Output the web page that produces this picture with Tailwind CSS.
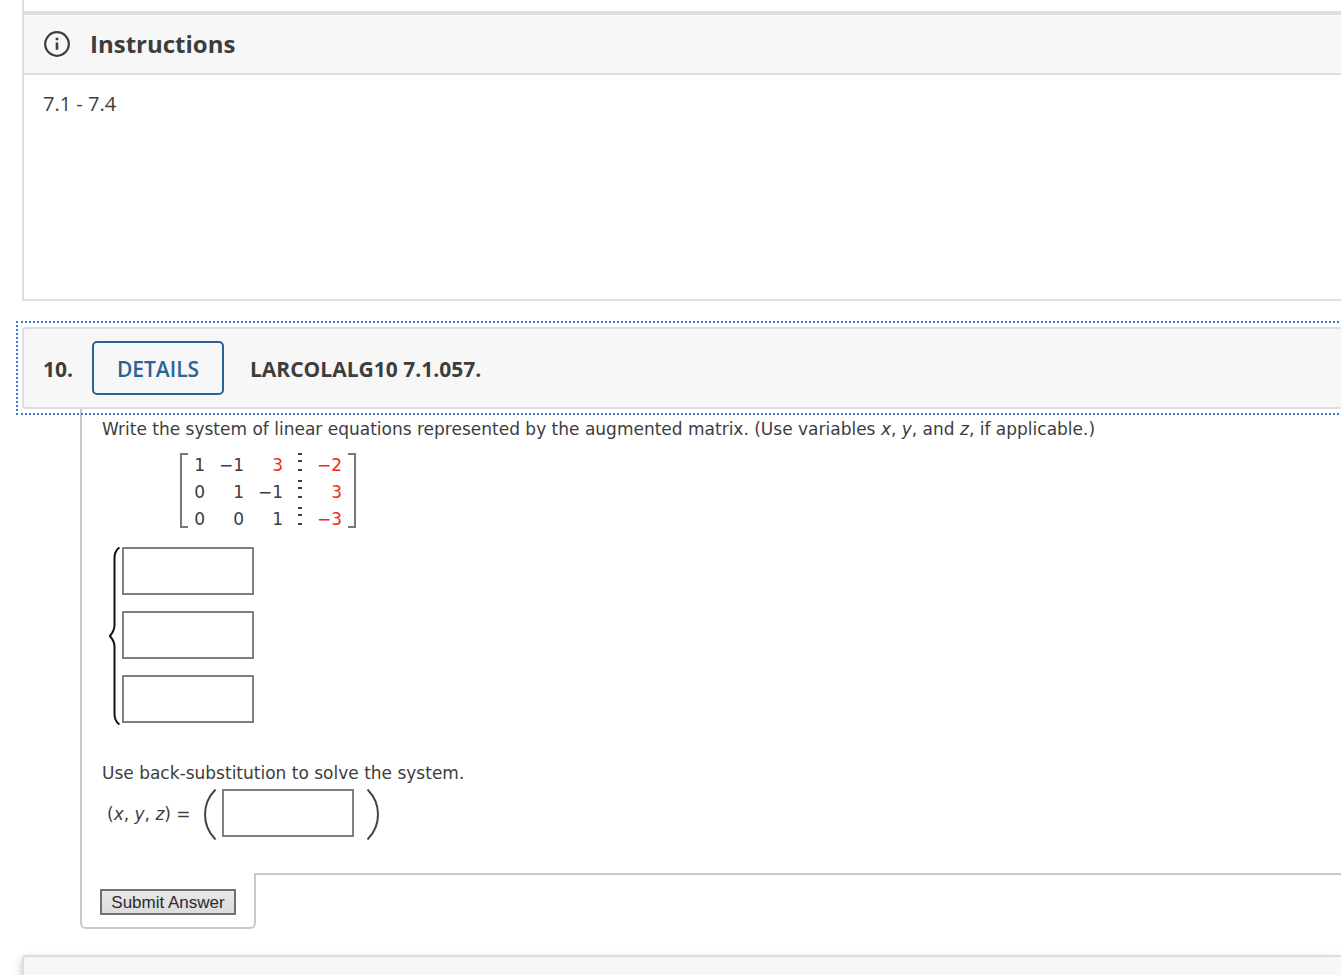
<!DOCTYPE html>
<html lang="en">
<head>
    <meta charset="UTF-8">
    <meta name="viewport" content="width=device-width, initial-scale=1.0">
    <title>Assignment</title>
    <script src="https://cdn.jsdelivr.net/npm/@tailwindcss/browser@4"></script>
</head>
<body class="bg-white text-[#3d3d3d] font-['Open_Sans',sans-serif] pl-[22px] overflow-x-hidden">
    <!-- Instructions -->
    <section class="border-l-2 border-b-2 border-[#dedede] pt-[11px]">
        <div class="border-t-4 border-b-2 border-[#dedede] bg-[#f7f7f7] h-16 pl-5 flex items-center gap-5">
            <svg class="w-[26px] h-[26px]" viewBox="0 0 26 26" fill="none" stroke="#3d3d3d" stroke-width="2.2">
                <circle cx="13" cy="13" r="11.8"/>
                <path d="M13 11.500v7.200M13 6.800v2.500" stroke-width="2.6"/>
            </svg>
            <h2 class="text-2xl font-bold">Instructions</h2>
        </div>
        <div class="h-56 pl-[19px] pt-[14px] text-xl leading-[30px]">7.1 - 7.4</div>
    </section>

    <!-- Question -->
    <section class="mt-[26px]">
        <div class="outline-2 outline-dotted outline-offset-4 outline-[#3879d9]">
            <div class="h-[82px] border-2 border-r-0 border-[#dedede] rounded-l-sm bg-[#f7f7f7] flex items-center pl-[19px] text-[21px] font-bold">
                <span class="w-[49px] pt-[3px]">10.</span>
                <button type="button" class="w-[132px] h-[54px] pt-[3px] border-2 border-[#2a6496] rounded-[5px] text-[#2a6496] font-semibold">DETAILS</button>
                <h3 class="ml-[26px] pt-[3px]">LARCOLALG10 7.1.057.</h3>
            </div>
        </div>

        <div class="ml-[58px]">
            <div class="border-l-2 border-[#c9c9c9] h-[464px] pl-5 pt-2 font-['Verdana','DejaVu_Sans',sans-serif] text-[17px] leading-6">
                <p>Write the system of linear equations represented by the augmented matrix. (Use variables <i>x</i>, <i>y</i>, and <i>z</i>, if applicable.)</p>

                <!-- Augmented matrix -->
                <div class="mt-3 ml-[78px] flex h-[75px]">
                    <div class="w-2 border-2 border-r-0 border-[#777]"></div>
                    <table class="text-right leading-[27px] -mt-px">
                        <tbody>
                            <tr>
                                <td class="w-[17px]">1</td><td class="w-[39px]">−1</td><td class="w-[39px] text-[#f02a1d]">3</td>
                                <td class="w-[19px]"><svg class="ml-auto w-1 h-[26px]" viewBox="0 0 4 26" fill="#3d3d3d"><path d="M0 0h4v2H0zM0 7h4v2H0zM0 16h4v2H0z"/></svg></td>
                                <td class="w-10 text-[#f02a1d]">−2</td>
                            </tr>
                            <tr>
                                <td>0</td><td>1</td><td>−1</td>
                                <td><svg class="ml-auto w-1 h-[26px]" viewBox="0 0 4 26" fill="#3d3d3d"><path d="M0 0h4v2H0zM0 7h4v2H0zM0 16h4v2H0z"/></svg></td>
                                <td class="text-[#f02a1d]">3</td>
                            </tr>
                            <tr>
                                <td>0</td><td>0</td><td>1</td>
                                <td><svg class="ml-auto w-1 h-[26px]" viewBox="0 0 4 26" fill="#3d3d3d"><path d="M0 0h4v2H0zM0 7h4v2H0zM0 16h4v2H0z"/></svg></td>
                                <td class="text-[#f02a1d]">−3</td>
                            </tr>
                        </tbody>
                    </table>
                    <div class="ml-[6px] w-2 border-2 border-l-0 border-[#777]"></div>
                </div>

                <!-- Equations -->
                <div class="mt-[19px] ml-[7px] flex gap-[2px]">
                    <svg class="w-[11px] h-[178px]" viewBox="0 0 11 178" fill="none" stroke="#111">
                        <path stroke-width="2" d="M10.500 .5Q5.500 4 5.500 11V78Q5.500 84 .8 89Q5.500 94 5.500 100V167Q5.500 174 10.500 177.500"/>
                    </svg>
                    <div class="flex flex-col gap-4">
                        <input type="text" aria-label="Equation 1" class="w-[132px] h-12 border-2 border-[#808080] px-2">
                        <input type="text" aria-label="Equation 2" class="w-[132px] h-12 border-2 border-[#808080] px-2">
                        <input type="text" aria-label="Equation 3" class="w-[132px] h-12 border-2 border-[#808080] px-2">
                    </div>
                </div>

                <p class="mt-9">Use back-substitution to solve the system.</p>
                <div class="mt-1 ml-[5px] flex">
                    <label for="solution" class="w-[97px] pt-[13px] whitespace-nowrap">(<i>x</i>, <i>y</i>, <i>z</i>) =</label>
                    <svg class="w-3 h-[51px]" viewBox="0 0 12 51" fill="none" stroke="#444" stroke-width="2"><path d="M11.500 .5Q1 11 1 25.500T11.500 50.500"/></svg>
                    <input id="solution" type="text" class="ml-[6px] w-[132px] h-12 border-2 border-[#808080] px-2">
                    <svg class="ml-[13px] w-3 h-[51px]" viewBox="0 0 12 51" fill="none" stroke="#444" stroke-width="2"><path d="M.5 .5Q11 11 11 25.500T.5 50.500"/></svg>
                </div>
            </div>

            <div class="flex">
                <div class="w-44 h-14 border-2 border-t-0 border-[#c9c9c9] rounded-b-md pl-[18px] pt-4">
                    <button type="submit" class="w-[136px] h-[26px] border-2 border-[#707070] bg-linear-to-b from-[#e8e8e8] to-[#dcdcdc] font-['Liberation_Sans',sans-serif] text-[17px] leading-6 text-[#2b2b2b] whitespace-nowrap">Submit Answer</button>
                </div>
                <div class="flex-1 border-t-2 border-[#c9c9c9]"></div>
            </div>
        </div>
    </section>

    <!-- Next question -->
    <section class="mt-[26px] h-5 border-2 border-r-0 border-b-0 border-[#dedede] rounded-tl-sm bg-[#f7f7f7] shadow-[0_4px_8px_rgba(0,0,0,0.25)]"></section>
</body>
</html>
